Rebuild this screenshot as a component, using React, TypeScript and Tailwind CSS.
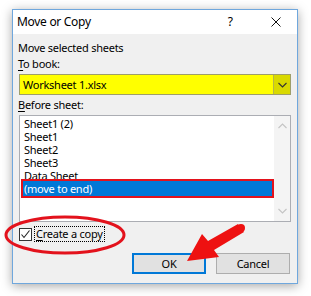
import React from "react";

const items = ["Sheet1 (2)", "Sheet1", "Sheet2", "Sheet3", "Data Sheet"];

const Chevron = ({ up, color }: { up?: boolean; color: string }) => (
    <svg width="9" height="6" viewBox="0 0 9 6">
        <path
            d={up ? "M0.5 5 L4.5 1 L8.5 5" : "M0.5 1 L4.5 5 L8.5 1"}
            fill="none"
            stroke={color}
            strokeWidth="1.1"
        />
    </svg>
);

export default function App() {
    return (
        <div
            className="relative h-[296px] w-[311px] overflow-hidden bg-white pl-[12px] pt-[9px] text-[11px] text-black"
            style={{ fontFamily: '"Noto Sans", "Open Sans", sans-serif' }}
        >
            <div className="flex h-[275px] w-[286px] flex-col border border-[#6fa7dd] bg-[#f0f0f0] shadow-[0_2px_10px_rgba(0,0,0,0.35)]">
                {/* title bar */}
                <div className="flex h-[24px] shrink-0 items-center bg-white pl-[4px] pr-[16px]">
                    <span className="flex-1 text-[12px] tracking-[-0.3px]">
                        Move or Copy
                    </span>
                    <span className="mr-[38px] text-[12px]">?</span>
                    <svg width="10" height="10" viewBox="0 0 10 10">
                        <path
                            d="M0.5 0.5 L9.5 9.5 M9.5 0.5 L0.5 9.5"
                            stroke="#111"
                            strokeWidth="1"
                        />
                    </svg>
                </div>

                {/* body */}
                <div className="flex flex-1 flex-col px-[6px] pt-[6px] leading-[16px] tracking-[-0.25px]">
                    <p className="-ml-[1px]">Move selected sheets</p>
                    <p className="-ml-[1px]">
                        <span className="underline underline-offset-2">T</span>o book:
                    </p>
                    <div className="mt-[2px] flex h-[21px] border border-[#9e9e6a] bg-[#ffff00]">
                        <span className="flex-1 pl-[3px] leading-[19px]">
                            Worksheet 1.xlsx
                        </span>
                        <div className="flex w-[17px] items-center justify-center border-l border-[#b5b54a] bg-[#d9d900]">
                            <Chevron color="#333" />
                        </div>
                    </div>
                    <p className="-ml-[1px] mt-[2px]">
                        <span className="underline underline-offset-2">B</span>efore sheet:
                    </p>
                    <div className="mt-[2px] flex h-[107px] border border-[#abadb3] bg-white">
                        <div className="flex flex-1 flex-col pl-[1px] pt-[1px] leading-[13px]">
                            {items.map((s) => (
                                <div key={s} className="pl-[3px]">
                                    {s}
                                </div>
                            ))}
                            <div className="-mt-[3px] h-[19px] border-2 border-[#e3121c] bg-[#0078d7] pl-[1px] leading-[15px] text-white">
                                (move to end)
                            </div>
                        </div>
                        <div className="flex w-[16px] flex-col items-center justify-between bg-[#f4f4f4] py-[7px]">
                            <Chevron up color="#c4c4c4" />
                            <Chevron color="#c4c4c4" />
                        </div>
                    </div>

                    {/* checkbox */}
                    <div className="mt-[4px] flex h-[16px] items-center">
                        <div className="flex h-[13px] w-[13px] items-center justify-center border border-[#333] bg-white">
                            <svg width="11" height="11" viewBox="0 0 11 11">
                                <path
                                    d="M1.5 5.5 L4 8.5 L9.5 1.5"
                                    fill="none"
                                    stroke="#222"
                                    strokeWidth="1.1"
                                />
                            </svg>
                        </div>
                        <span className="ml-[2px] border border-dotted border-black px-[1px] leading-[14px]">
                            <span className="underline underline-offset-2">C</span>reate a copy
                        </span>
                    </div>

                    {/* buttons */}
                    <div className="mt-[11px] flex justify-end gap-[10px] pr-[1px]">
                        <button className="h-[21px] w-[74px] border-2 border-[#0078d7] bg-[#e1e1e1] text-[11px] leading-[17px]">
                            OK
                        </button>
                        <button className="h-[21px] w-[74px] border border-[#adadad] bg-[#e1e1e1] text-[11px] leading-[19px]">
                            Cancel
                        </button>
                    </div>
                </div>
            </div>

            {/* annotations */}
            <svg
                className="pointer-events-none absolute left-0 top-0"
                width="311"
                height="296"
                viewBox="0 0 311 296"
            >
                <ellipse
                    cx="65"
                    cy="235"
                    rx="59"
                    ry="18"
                    fill="none"
                    stroke="#e3121c"
                    strokeWidth="3"
                />
                <polygon
                    points="187,261 202,234 208,241 238,224 244,232 214,250 219,257"
                    fill="#ee1111"
                />
                <circle cx="241" cy="228" r="4" fill="#ee1111" />
            </svg>
        </div>
    );
}
